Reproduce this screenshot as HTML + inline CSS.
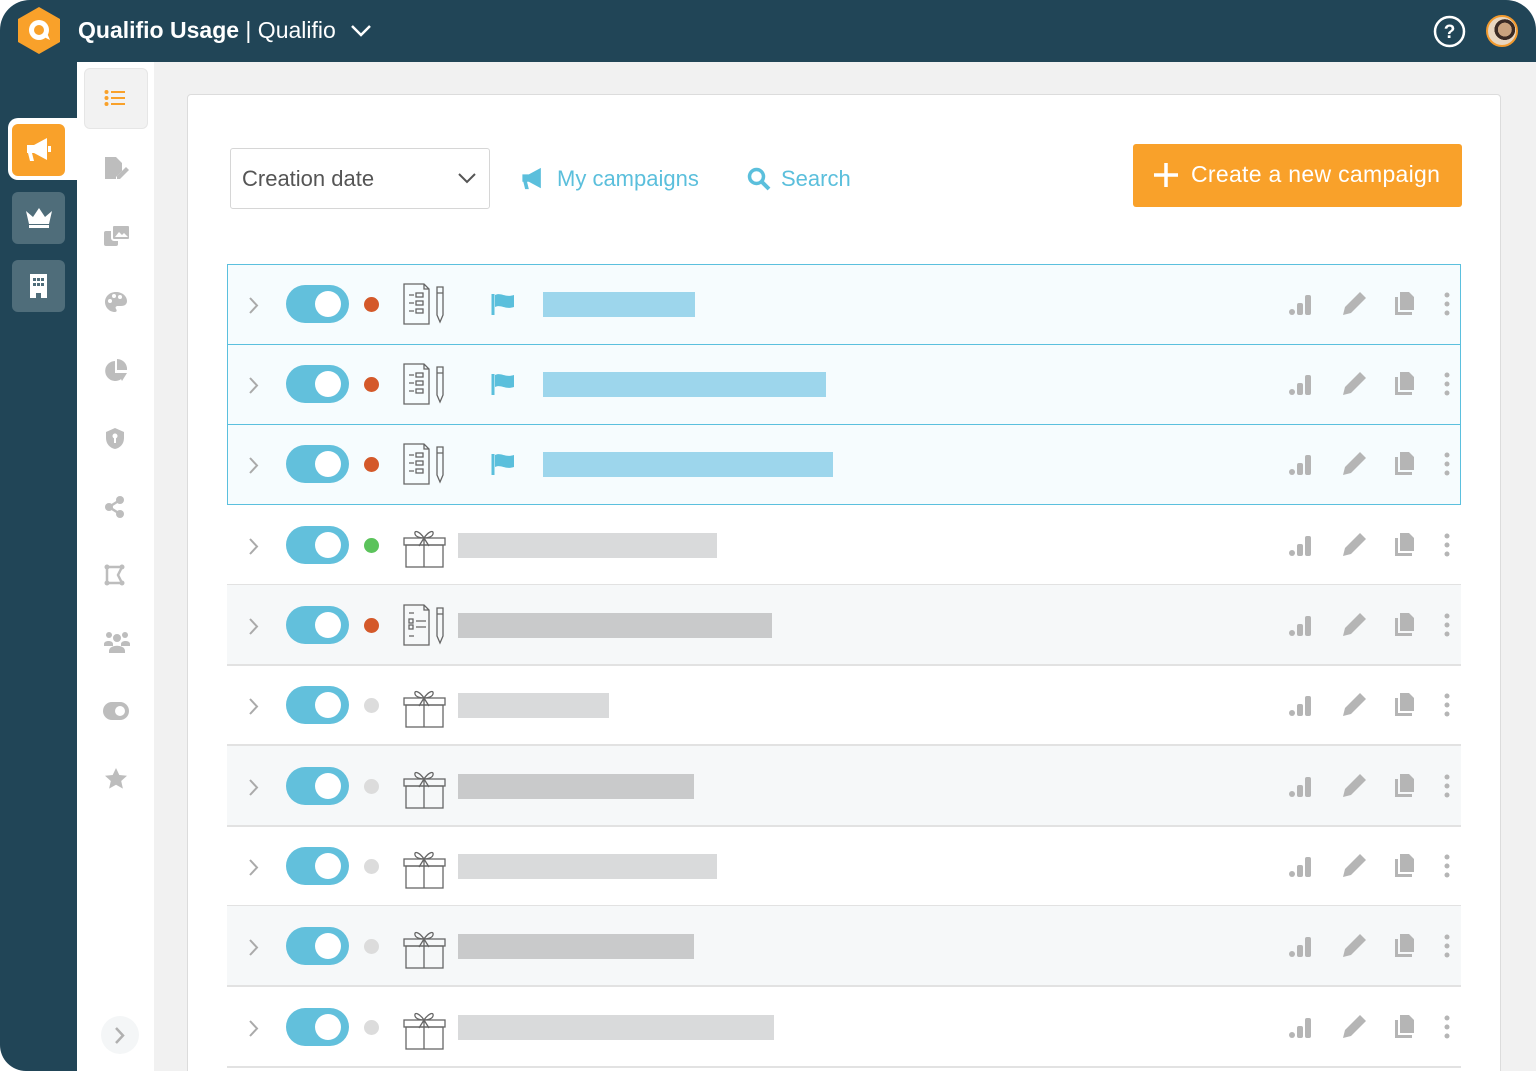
<!DOCTYPE html>
<html style="width:1536px;height:1071px;overflow:hidden"><head><meta charset="utf-8"><style>
*{margin:0;padding:0;box-sizing:border-box}
body{width:1536px;height:1071px;background:#fff;position:relative;overflow:hidden;font-family:"Liberation Sans",sans-serif}
.abs{position:absolute}
#hdr{left:0;top:0;width:1536px;height:62px;background:#214557;border-radius:30px 30px 0 0}
#rail{left:0;top:40px;width:77px;height:1031px;background:#214557;border-radius:0 0 0 26px}
#side{left:77px;top:62px;width:77px;height:1009px;background:#fff}
#main{left:154px;top:62px;width:1382px;height:1009px;background:#f1f1f1}
#card{left:187px;top:94px;width:1314px;height:1000px;background:#fff;border:1px solid #dcdcdc;border-radius:4px}
.row{position:absolute;left:227px;width:1234px;height:81px;border-bottom:2px solid #e2e2e2}
.row.b{background:#f6fcfe;border:1px solid #5bc0de;border-bottom:none}
.row.alt{background:#f6f8f9}
.chev{position:absolute;left:21px;top:32px}
.tg{position:absolute;left:59px;top:21px;width:63px;height:38px;border-radius:19px;background:#62c0dc}
.tg:after{content:"";position:absolute;right:8px;top:6px;width:26px;height:26px;border-radius:50%;background:#fff}
.dot{position:absolute;left:137px;top:33px;width:15px;height:15px;border-radius:50%}
.ic{position:absolute;left:176px;top:19px}
.bar{position:absolute;top:28px;height:25px}
.act{position:absolute;left:1060px;top:27px}
</style></head><body>
<div id="main" class="abs"></div>
<div id="hdr" class="abs"></div>
<div id="rail" class="abs"></div>
<div id="side" class="abs"></div>
<svg class="abs" style="left:17px;top:7px" width="44" height="47" viewBox="0 0 44 47"><path d="M22 0L43 12v23L22 47 1 35V12z" fill="#f9a12a"/><circle cx="22" cy="23" r="10" fill="#fff"/><circle cx="22" cy="23" r="5" fill="#f9a12a"/><path d="M27 30l6 3-3-7z" fill="#fff"/></svg>
<div class="abs" style="left:78px;top:17px;color:#fff;font-size:23px;white-space:nowrap"><b>Qualifio Usage</b> | Qualifio</div>
<svg class="abs" style="left:350px;top:24px" width="22" height="14"><path d="M2 2l9 9 9-9" stroke="#fff" stroke-width="2.5" fill="none"/></svg>
<svg class="abs" style="left:1433px;top:15px" width="33" height="33"><circle cx="16.5" cy="16.5" r="14.5" stroke="#fff" stroke-width="2.5" fill="none"/><text x="16.5" y="23" text-anchor="middle" fill="#fff" font-size="19" font-weight="bold" font-family="Liberation Sans">?</text></svg>
<div class="abs" style="left:1486px;top:15px;width:32px;height:32px;border-radius:50%;background:radial-gradient(circle at 60% 45%,#c9a27e 0 30%,#3a2a24 31% 45%,#e8d6c0 46%);border:2px solid #f29a2e"></div>
<div class="abs" style="left:8px;top:118px;width:69px;height:62px;background:#fff;border-radius:10px 0 0 10px"></div>
<div class="abs" style="left:12px;top:124px;width:53px;height:52px;background:#f9a12a;border-radius:6px"></div>
<svg class="abs" style="left:25px;top:137px" width="27" height="26" viewBox="0 0 27 26"><path d="M2 8h7l13-7v22L9 16H7l2 8H5l-2-8H2z" fill="#fff"/><rect x="23" y="9" width="3" height="6" fill="#fff"/></svg>
<div class="abs" style="left:12px;top:192px;width:53px;height:52px;background:#4f6d7a;border-radius:6px"></div>
<svg class="abs" style="left:25px;top:207px" width="28" height="22"><path d="M1 4l7 6 6-9 6 9 7-6-3 13H4z" fill="#fff"/><rect x="4" y="18" width="20" height="3" fill="#fff"/></svg>
<div class="abs" style="left:12px;top:260px;width:53px;height:52px;background:#4f6d7a;border-radius:6px"></div>
<svg class="abs" style="left:29px;top:273px" width="19" height="26"><path d="M1 1h17v24h-6v-5h-5v5H1z" fill="#fff"/><g fill="#4f6d7a"><rect x="4" y="5" width="3" height="3"/><rect x="8" y="5" width="3" height="3"/><rect x="12" y="5" width="3" height="3"/><rect x="4" y="10" width="3" height="3"/><rect x="8" y="10" width="3" height="3"/><rect x="12" y="10" width="3" height="3"/></g></svg>
<div class="abs" style="left:84px;top:68px;width:64px;height:61px;background:#f2f2f2;border-radius:6px;border:1px solid #e6e6e6"></div>
<svg class="abs" style="left:104px;top:89px" width="22" height="18"><g fill="#f9a12a"><circle cx="2.5" cy="3" r="2"/><circle cx="2.5" cy="9" r="2"/><circle cx="2.5" cy="15" r="2"/><rect x="7" y="2" width="14" height="2"/><rect x="7" y="8" width="14" height="2"/><rect x="7" y="14" width="14" height="2"/></g></svg>
<svg class="abs" style="left:104px;top:156px" width="26" height="24" viewBox="0 0 26 24"><path d="M1 1h11l6 6v8l-6 6v2H1z" fill="#bdbdbd"/><path d="M13 20l9-9 3 3-9 9h-3z" fill="#bdbdbd"/></svg>
<svg class="abs" style="left:103px;top:223px" width="28" height="24"><rect x="1" y="8" width="14" height="15" rx="2" fill="#bdbdbd"/><rect x="9" y="2" width="18" height="15" rx="2" fill="#bdbdbd" stroke="#fff" stroke-width="2"/><path d="M12 14l4-5 3 3 2-2 4 4z" fill="#fff"/></svg>
<svg class="abs" style="left:104px;top:291px" width="24" height="22"><path d="M12 1C5 1 1 6 1 11s4 10 10 10c2 0 2-2 1-3-1-2 0-3 2-3h3c4 0 6-2 6-5 0-5-5-9-11-9z" fill="#bdbdbd"/><g fill="#fff"><circle cx="6" cy="10" r="2"/><circle cx="10" cy="5" r="2"/><circle cx="16" cy="6" r="2"/></g></svg>
<svg class="abs" style="left:104px;top:359px" width="24" height="24"><path d="M11 2a10 10 0 1 0 10 12H11z" fill="#bdbdbd"/><path d="M13 0v11h10A10 10 0 0 0 13 0z" fill="#bdbdbd"/><path d="M14 14h9l-5 8z" fill="#bdbdbd"/></svg>
<svg class="abs" style="left:105px;top:427px" width="20" height="23"><path d="M10 1l9 4v6c0 6-4 10-9 11-5-1-9-5-9-11V5z" fill="#bdbdbd"/><circle cx="10" cy="9" r="2.5" fill="#fff"/><rect x="9" y="10" width="2" height="6" fill="#fff"/></svg>
<svg class="abs" style="left:104px;top:496px" width="22" height="22"><g fill="#bdbdbd"><circle cx="16" cy="4" r="4"/><circle cx="5" cy="11" r="4"/><circle cx="16" cy="18" r="4"/></g><path d="M16 4L5 11l11 7" stroke="#bdbdbd" stroke-width="2.5" fill="none"/></svg>
<svg class="abs" style="left:104px;top:564px" width="22" height="22"><path d="M3 3h15l-4 8 4 8H3z" stroke="#bdbdbd" stroke-width="2.5" fill="none"/><g fill="#bdbdbd"><circle cx="3" cy="3" r="2.5"/><circle cx="18" cy="3" r="2.5"/><circle cx="3" cy="19" r="2.5"/><circle cx="18" cy="19" r="2.5"/></g></svg>
<svg class="abs" style="left:103px;top:631px" width="28" height="22"><g fill="#bdbdbd"><circle cx="6" cy="4" r="3"/><circle cx="22" cy="4" r="3"/><circle cx="14" cy="7" r="4"/><path d="M1 13c0-4 9-4 9 0v2H1zM18 13c0-4 9-4 9 0v2h-9z"/><path d="M6 20c0-7 16-7 16 0v2H6z"/></g></svg>
<svg class="abs" style="left:103px;top:702px" width="26" height="18"><rect x="0" y="0" width="26" height="18" rx="9" fill="#bdbdbd"/><circle cx="17" cy="9" r="5" fill="#fff"/></svg>
<svg class="abs" style="left:104px;top:767px" width="24" height="23"><path d="M12 1l3.3 7 7.7.8-5.8 5.2 1.7 7.6L12 17.7 5.1 21.6l1.7-7.6L1 8.8 8.7 8z" fill="#bdbdbd"/></svg>
<div class="abs" style="left:101px;top:1016px;width:38px;height:38px;border-radius:50%;background:#f4f6f7"></div>
<svg class="abs" style="left:114px;top:1026px" width="12" height="19"><path d="M2 2l7 7.5L2 17" stroke="#b0b0b0" stroke-width="2.5" fill="none"/></svg>

<div id="card" class="abs"></div>
<div class="abs" style="left:230px;top:148px;width:260px;height:61px;border:1px solid #d6d6d6;border-radius:3px;background:#fff"></div>
<div class="abs" style="left:242px;top:166px;font-size:22px;color:#555;white-space:nowrap">Creation date</div>
<svg class="abs" style="left:457px;top:172px" width="20" height="13"><path d="M2 2l8 8 8-8" stroke="#555" stroke-width="2" fill="none"/></svg>
<svg class="abs" style="left:520px;top:167px" width="26" height="24" viewBox="0 0 27 26"><path d="M2 8h7l13-7v22L9 16H7l2 8H5l-2-8H2z" fill="#5bbfdc"/></svg>
<div class="abs" style="left:557px;top:166px;font-size:22px;color:#5bbfdc;white-space:nowrap">My campaigns</div>
<svg class="abs" style="left:747px;top:167px" width="24" height="24"><circle cx="9.5" cy="9.5" r="7" stroke="#5bbfdc" stroke-width="3.5" fill="none"/><path d="M15 15l7 7" stroke="#5bbfdc" stroke-width="4"/></svg>
<div class="abs" style="left:781px;top:166px;font-size:22px;color:#5bbfdc;white-space:nowrap">Search</div>
<div class="abs" style="left:1133px;top:144px;width:329px;height:63px;background:#f9a12a;border-radius:3px"></div>
<svg class="abs" style="left:1153px;top:162px" width="26" height="26"><path d="M13 1v24M1 13h24" stroke="#fff" stroke-width="3.5"/></svg>
<div class="abs" style="left:1191px;top:161px;font-size:23px;color:#fff;white-space:nowrap;letter-spacing:.3px">Create a new campaign</div>

<div class="row b" style="top:264px"></div>
<div class="row b" style="top:344px"></div>
<div class="row b" style="top:424px;border-bottom:1px solid #5bc0de;height:81px"></div>
<div class="row" style="top:505px"></div>
<div class="row alt" style="top:585px"></div>
<div class="row" style="top:665px"></div>
<div class="row alt" style="top:746px"></div>
<div class="row" style="top:826px"></div>
<div class="row alt" style="top:906px"></div>
<div class="row" style="top:987px"></div>

<div class="abs" style="left:227px;top:264px;width:1234px;height:81px">
<svg class="chev" width="12" height="19"><path d="M2 2l7 7.5L2 17" stroke="#aaa" stroke-width="2" fill="none"/></svg><div class="tg"></div><div class="dot" style="background:#d4592a"></div>
<svg class="ic" width="44" height="42" viewBox="0 0 44 42" fill="none" stroke="#666" stroke-width="1.3"><path d="M1 1h20l5 5v35H1zM21 1v5h5M6 12h5M6 20h5M6 28h5"/><rect x="13" y="10" width="7" height="4"/><rect x="13" y="18" width="7" height="4"/><rect x="13" y="26" width="7" height="4"/><path d="M34 4h6v28l-3 7-3-7zM34 10h6"/></svg>
<svg class="abs" style="left:264px;top:28px" width="26" height="24"><path d="M2 2v21" stroke="#5bbfdc" stroke-width="3"/><path d="M4 3c6-3 10 3 19 0v12c-9 3-13-3-19 0z" fill="#5bbfdc"/></svg>
<div class="bar" style="left:316px;width:152px;background:#9dd6ec"></div>
<svg class="act" width="175" height="26"><g fill="#b5b5b5"><circle cx="5" cy="21" r="3"/><rect x="10" y="12" width="6" height="12" rx="2"/><rect x="18" y="4" width="6" height="20" rx="2"/><path d="M56 24l2-8 15-15 6 6-15 15z"/><path d="M108 6h3v15h14v3h-17z"/><path d="M113 1h9l5 5v13h-14z"/><circle cx="160" cy="4" r="2.5"/><circle cx="160" cy="13" r="2.5"/><circle cx="160" cy="22" r="2.5"/></g></svg>
</div>
<div class="abs" style="left:227px;top:344px;width:1234px;height:81px">
<svg class="chev" width="12" height="19"><path d="M2 2l7 7.5L2 17" stroke="#aaa" stroke-width="2" fill="none"/></svg><div class="tg"></div><div class="dot" style="background:#d4592a"></div>
<svg class="ic" width="44" height="42" viewBox="0 0 44 42" fill="none" stroke="#666" stroke-width="1.3"><path d="M1 1h20l5 5v35H1zM21 1v5h5M6 12h5M6 20h5M6 28h5"/><rect x="13" y="10" width="7" height="4"/><rect x="13" y="18" width="7" height="4"/><rect x="13" y="26" width="7" height="4"/><path d="M34 4h6v28l-3 7-3-7zM34 10h6"/></svg>
<svg class="abs" style="left:264px;top:28px" width="26" height="24"><path d="M2 2v21" stroke="#5bbfdc" stroke-width="3"/><path d="M4 3c6-3 10 3 19 0v12c-9 3-13-3-19 0z" fill="#5bbfdc"/></svg>
<div class="bar" style="left:316px;width:283px;background:#9dd6ec"></div>
<svg class="act" width="175" height="26"><g fill="#b5b5b5"><circle cx="5" cy="21" r="3"/><rect x="10" y="12" width="6" height="12" rx="2"/><rect x="18" y="4" width="6" height="20" rx="2"/><path d="M56 24l2-8 15-15 6 6-15 15z"/><path d="M108 6h3v15h14v3h-17z"/><path d="M113 1h9l5 5v13h-14z"/><circle cx="160" cy="4" r="2.5"/><circle cx="160" cy="13" r="2.5"/><circle cx="160" cy="22" r="2.5"/></g></svg>
</div>
<div class="abs" style="left:227px;top:424px;width:1234px;height:81px">
<svg class="chev" width="12" height="19"><path d="M2 2l7 7.5L2 17" stroke="#aaa" stroke-width="2" fill="none"/></svg><div class="tg"></div><div class="dot" style="background:#d4592a"></div>
<svg class="ic" width="44" height="42" viewBox="0 0 44 42" fill="none" stroke="#666" stroke-width="1.3"><path d="M1 1h20l5 5v35H1zM21 1v5h5M6 12h5M6 20h5M6 28h5"/><rect x="13" y="10" width="7" height="4"/><rect x="13" y="18" width="7" height="4"/><rect x="13" y="26" width="7" height="4"/><path d="M34 4h6v28l-3 7-3-7zM34 10h6"/></svg>
<svg class="abs" style="left:264px;top:28px" width="26" height="24"><path d="M2 2v21" stroke="#5bbfdc" stroke-width="3"/><path d="M4 3c6-3 10 3 19 0v12c-9 3-13-3-19 0z" fill="#5bbfdc"/></svg>
<div class="bar" style="left:316px;width:290px;background:#9dd6ec"></div>
<svg class="act" width="175" height="26"><g fill="#b5b5b5"><circle cx="5" cy="21" r="3"/><rect x="10" y="12" width="6" height="12" rx="2"/><rect x="18" y="4" width="6" height="20" rx="2"/><path d="M56 24l2-8 15-15 6 6-15 15z"/><path d="M108 6h3v15h14v3h-17z"/><path d="M113 1h9l5 5v13h-14z"/><circle cx="160" cy="4" r="2.5"/><circle cx="160" cy="13" r="2.5"/><circle cx="160" cy="22" r="2.5"/></g></svg>
</div>

<div class="abs" style="left:227px;top:505px;width:1234px;height:81px">
<svg class="chev" width="12" height="19"><path d="M2 2l7 7.5L2 17" stroke="#aaa" stroke-width="2" fill="none"/></svg><div class="tg"></div><div class="dot" style="background:#5bc35b"></div>
<svg class="ic" width="44" height="44" viewBox="0 0 44 44" fill="none" stroke="#666" stroke-width="1.3"><rect x="1" y="14" width="41" height="7"/><rect x="3" y="21" width="37" height="22"/><path d="M21 14v29M21 14c-4-6-10-9-9-4 1 4 9 4 9 4zM21 14c4-6 10-9 9-4-1 4-9 4-9 4zM21 14l-5 8M21 14l5 8"/></svg>
<div class="bar" style="left:231px;width:259px;background:#d9dadb"></div>
<svg class="act" width="175" height="26"><g fill="#b5b5b5"><circle cx="5" cy="21" r="3"/><rect x="10" y="12" width="6" height="12" rx="2"/><rect x="18" y="4" width="6" height="20" rx="2"/><path d="M56 24l2-8 15-15 6 6-15 15z"/><path d="M108 6h3v15h14v3h-17z"/><path d="M113 1h9l5 5v13h-14z"/><circle cx="160" cy="4" r="2.5"/><circle cx="160" cy="13" r="2.5"/><circle cx="160" cy="22" r="2.5"/></g></svg>
</div>
<div class="abs" style="left:227px;top:585px;width:1234px;height:81px">
<svg class="chev" width="12" height="19"><path d="M2 2l7 7.5L2 17" stroke="#aaa" stroke-width="2" fill="none"/></svg><div class="tg"></div><div class="dot" style="background:#d4592a"></div>
<svg class="ic" width="44" height="42" viewBox="0 0 44 42" fill="none" stroke="#666" stroke-width="1.3"><path d="M1 1h20l5 5v35H1zM21 1v5h5M6 9h5M13 17h10M13 23h10M6 32h5"/><rect x="6" y="15" width="4" height="4"/><rect x="6" y="21" width="4" height="4"/><path d="M34 4h6v28l-3 7-3-7zM34 10h6"/></svg>
<div class="bar" style="left:231px;width:314px;background:#c9cacb"></div>
<svg class="act" width="175" height="26"><g fill="#b5b5b5"><circle cx="5" cy="21" r="3"/><rect x="10" y="12" width="6" height="12" rx="2"/><rect x="18" y="4" width="6" height="20" rx="2"/><path d="M56 24l2-8 15-15 6 6-15 15z"/><path d="M108 6h3v15h14v3h-17z"/><path d="M113 1h9l5 5v13h-14z"/><circle cx="160" cy="4" r="2.5"/><circle cx="160" cy="13" r="2.5"/><circle cx="160" cy="22" r="2.5"/></g></svg>
</div>
<div class="abs" style="left:227px;top:665px;width:1234px;height:81px">
<svg class="chev" width="12" height="19"><path d="M2 2l7 7.5L2 17" stroke="#aaa" stroke-width="2" fill="none"/></svg><div class="tg"></div><div class="dot" style="background:#dcdcdc"></div>
<svg class="ic" width="44" height="44" viewBox="0 0 44 44" fill="none" stroke="#666" stroke-width="1.3"><rect x="1" y="14" width="41" height="7"/><rect x="3" y="21" width="37" height="22"/><path d="M21 14v29M21 14c-4-6-10-9-9-4 1 4 9 4 9 4zM21 14c4-6 10-9 9-4-1 4-9 4-9 4zM21 14l-5 8M21 14l5 8"/></svg>
<div class="bar" style="left:231px;width:151px;background:#d9dadb"></div>
<svg class="act" width="175" height="26"><g fill="#b5b5b5"><circle cx="5" cy="21" r="3"/><rect x="10" y="12" width="6" height="12" rx="2"/><rect x="18" y="4" width="6" height="20" rx="2"/><path d="M56 24l2-8 15-15 6 6-15 15z"/><path d="M108 6h3v15h14v3h-17z"/><path d="M113 1h9l5 5v13h-14z"/><circle cx="160" cy="4" r="2.5"/><circle cx="160" cy="13" r="2.5"/><circle cx="160" cy="22" r="2.5"/></g></svg>
</div>
<div class="abs" style="left:227px;top:746px;width:1234px;height:81px">
<svg class="chev" width="12" height="19"><path d="M2 2l7 7.5L2 17" stroke="#aaa" stroke-width="2" fill="none"/></svg><div class="tg"></div><div class="dot" style="background:#dcdcdc"></div>
<svg class="ic" width="44" height="44" viewBox="0 0 44 44" fill="none" stroke="#666" stroke-width="1.3"><rect x="1" y="14" width="41" height="7"/><rect x="3" y="21" width="37" height="22"/><path d="M21 14v29M21 14c-4-6-10-9-9-4 1 4 9 4 9 4zM21 14c4-6 10-9 9-4-1 4-9 4-9 4zM21 14l-5 8M21 14l5 8"/></svg>
<div class="bar" style="left:231px;width:236px;background:#c9cacb"></div>
<svg class="act" width="175" height="26"><g fill="#b5b5b5"><circle cx="5" cy="21" r="3"/><rect x="10" y="12" width="6" height="12" rx="2"/><rect x="18" y="4" width="6" height="20" rx="2"/><path d="M56 24l2-8 15-15 6 6-15 15z"/><path d="M108 6h3v15h14v3h-17z"/><path d="M113 1h9l5 5v13h-14z"/><circle cx="160" cy="4" r="2.5"/><circle cx="160" cy="13" r="2.5"/><circle cx="160" cy="22" r="2.5"/></g></svg>
</div>
<div class="abs" style="left:227px;top:826px;width:1234px;height:81px">
<svg class="chev" width="12" height="19"><path d="M2 2l7 7.5L2 17" stroke="#aaa" stroke-width="2" fill="none"/></svg><div class="tg"></div><div class="dot" style="background:#dcdcdc"></div>
<svg class="ic" width="44" height="44" viewBox="0 0 44 44" fill="none" stroke="#666" stroke-width="1.3"><rect x="1" y="14" width="41" height="7"/><rect x="3" y="21" width="37" height="22"/><path d="M21 14v29M21 14c-4-6-10-9-9-4 1 4 9 4 9 4zM21 14c4-6 10-9 9-4-1 4-9 4-9 4zM21 14l-5 8M21 14l5 8"/></svg>
<div class="bar" style="left:231px;width:259px;background:#d9dadb"></div>
<svg class="act" width="175" height="26"><g fill="#b5b5b5"><circle cx="5" cy="21" r="3"/><rect x="10" y="12" width="6" height="12" rx="2"/><rect x="18" y="4" width="6" height="20" rx="2"/><path d="M56 24l2-8 15-15 6 6-15 15z"/><path d="M108 6h3v15h14v3h-17z"/><path d="M113 1h9l5 5v13h-14z"/><circle cx="160" cy="4" r="2.5"/><circle cx="160" cy="13" r="2.5"/><circle cx="160" cy="22" r="2.5"/></g></svg>
</div>
<div class="abs" style="left:227px;top:906px;width:1234px;height:81px">
<svg class="chev" width="12" height="19"><path d="M2 2l7 7.5L2 17" stroke="#aaa" stroke-width="2" fill="none"/></svg><div class="tg"></div><div class="dot" style="background:#dcdcdc"></div>
<svg class="ic" width="44" height="44" viewBox="0 0 44 44" fill="none" stroke="#666" stroke-width="1.3"><rect x="1" y="14" width="41" height="7"/><rect x="3" y="21" width="37" height="22"/><path d="M21 14v29M21 14c-4-6-10-9-9-4 1 4 9 4 9 4zM21 14c4-6 10-9 9-4-1 4-9 4-9 4zM21 14l-5 8M21 14l5 8"/></svg>
<div class="bar" style="left:231px;width:236px;background:#c9cacb"></div>
<svg class="act" width="175" height="26"><g fill="#b5b5b5"><circle cx="5" cy="21" r="3"/><rect x="10" y="12" width="6" height="12" rx="2"/><rect x="18" y="4" width="6" height="20" rx="2"/><path d="M56 24l2-8 15-15 6 6-15 15z"/><path d="M108 6h3v15h14v3h-17z"/><path d="M113 1h9l5 5v13h-14z"/><circle cx="160" cy="4" r="2.5"/><circle cx="160" cy="13" r="2.5"/><circle cx="160" cy="22" r="2.5"/></g></svg>
</div>
<div class="abs" style="left:227px;top:987px;width:1234px;height:81px">
<svg class="chev" width="12" height="19"><path d="M2 2l7 7.5L2 17" stroke="#aaa" stroke-width="2" fill="none"/></svg><div class="tg"></div><div class="dot" style="background:#dcdcdc"></div>
<svg class="ic" width="44" height="44" viewBox="0 0 44 44" fill="none" stroke="#666" stroke-width="1.3"><rect x="1" y="14" width="41" height="7"/><rect x="3" y="21" width="37" height="22"/><path d="M21 14v29M21 14c-4-6-10-9-9-4 1 4 9 4 9 4zM21 14c4-6 10-9 9-4-1 4-9 4-9 4zM21 14l-5 8M21 14l5 8"/></svg>
<div class="bar" style="left:231px;width:316px;background:#d9dadb"></div>
<svg class="act" width="175" height="26"><g fill="#b5b5b5"><circle cx="5" cy="21" r="3"/><rect x="10" y="12" width="6" height="12" rx="2"/><rect x="18" y="4" width="6" height="20" rx="2"/><path d="M56 24l2-8 15-15 6 6-15 15z"/><path d="M108 6h3v15h14v3h-17z"/><path d="M113 1h9l5 5v13h-14z"/><circle cx="160" cy="4" r="2.5"/><circle cx="160" cy="13" r="2.5"/><circle cx="160" cy="22" r="2.5"/></g></svg>
</div>
</body></html>
